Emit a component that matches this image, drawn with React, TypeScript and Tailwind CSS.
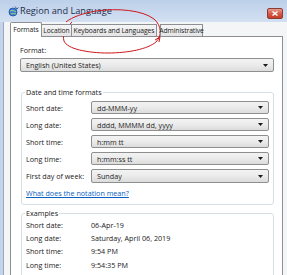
import React from "react";

const Arrow = () => (
  <svg width="5" height="3" viewBox="0 0 5 3" className="shrink-0">
    <path d="M0 0 H5 L2.5 3 Z" fill="#1a1a1a" />
  </svg>
);

const Combo = ({ text, h = "h-[13px]" }: { text: string; h?: string }) => (
  <div
    className={`flex-1 ${h} flex items-center pl-[5px] pr-[5px] border border-[#8e8f8f] rounded-[2px] bg-gradient-to-b from-[#f3f3f3] via-[#ebebeb] to-[#dcdcdc]`}
  >
    <span className="flex-1 truncate text-[#1e1e1e]">{text}</span>
    <Arrow />
  </div>
);

export default function App() {
  const rows = [
    ["Short date:", "dd-MMM-yy"],
    ["Long date:", "dddd, MMMM dd, yyyy"],
    ["Short time:", "h:mm tt"],
    ["Long time:", "h:mm:ss tt"],
    ["First day of week:", "Sunday"],
  ];
  const examples = [
    ["Short date:", "06-Apr-19"],
    ["Long date:", "Saturday, April 06, 2019"],
    ["Short time:", "9:54 PM"],
    ["Long time:", "9:54:35 PM"],
  ];
  return (
    <div className="relative w-[287px] h-[275px] overflow-hidden flex flex-col bg-[#c3d4eb] font-['Open_Sans',sans-serif] text-[7.2px] leading-[10px] text-[#222]">
      {/* title bar */}
      <div className="h-[22px] shrink-0 flex items-start bg-gradient-to-b from-[#bcd0ea] to-[#d3e0f1]">
        <svg width="11" height="11" viewBox="0 0 11 11" className="ml-[8px] mt-[6px]">
          <circle cx="5" cy="6" r="4" fill="#3b7dd8" stroke="#1f4f9a" strokeWidth="0.8" />
          <path d="M2 5 Q5 3 8 6 M3 8 Q5 7 8 8" stroke="#9fd07a" strokeWidth="1" fill="none" />
          <path d="M7 0.5 L9 3 L10.5 1.5" stroke="#2f5e9e" strokeWidth="1" fill="none" />
        </svg>
        <span className="ml-[1px] mt-[4px] text-[9.2px] leading-[14px] text-[#1d2f4a] whitespace-nowrap">Region and Language</span>
        <div className="ml-auto mr-[4px] mt-[8px] w-[16px] h-[11px] rounded-[2px] border border-[#8e3b33] bg-gradient-to-b from-[#e59a8e] via-[#d45c4c] to-[#c53c2a] flex items-center justify-center">
          <svg width="6" height="5" viewBox="0 0 6 5">
            <path d="M0.5 0.5 L5.5 4.5 M5.5 0.5 L0.5 4.5" stroke="#fff" strokeWidth="1.4" />
          </svg>
        </div>
      </div>
      {/* client */}
      <div className="flex-1 ml-[3px] border-l border-[#9aa8bb] bg-[#f4f5f7] flex flex-col pl-[6px] pr-[4px]">
        {/* tabs */}
        <div className="h-[14px] flex items-end shrink-0 relative z-10 text-[6.8px] whitespace-nowrap tracking-[-0.1px]">
          <div className="h-[15px] w-[32px] bg-white border border-b-0 border-[#8c8e94] rounded-t-[2px] flex items-center justify-center -mb-px">
            Formats
          </div>
          <div className="h-[12px] w-[30px] border border-b-0 border-l-0 border-[#8c8e94] bg-gradient-to-b from-[#f6f6f6] to-[#e4e4e4] flex items-center justify-center">
            Location
          </div>
          <div className="h-[12px] w-[85px] border border-b-0 border-l-0 border-[#8c8e94] bg-gradient-to-b from-[#f6f6f6] to-[#e4e4e4] flex items-center justify-center">
            Keyboards and Languages
          </div>
          <div className="h-[12px] w-[43px] ml-[3px] border border-b-0 border-[#8c8e94] bg-gradient-to-b from-[#f6f6f6] to-[#e4e4e4] flex items-center justify-center">
            Administrative
          </div>
        </div>
        {/* panel */}
        <div className="flex-1 bg-white border border-[#8c8e94] border-b-0 pl-[9px] pr-[8px] pt-[8px] flex flex-col">
          <div className="h-[10px]">Format:</div>
          <div className="mt-[3px] flex">
            <Combo text="English (United States)" h="h-[14px]" />
          </div>
          {/* group 1 */}
          <div className="mt-[20px] border border-[#d5dfe5] rounded-[3px] ml-[1px] pl-[4px] pr-[4px] pb-[6px] relative">
            <span className="absolute -top-[6px] left-[3px] bg-white px-[1px]">Date and time formats</span>
            <div className="pt-[8px] flex flex-col gap-[4px]">
              {rows.map(([l, v]) => (
                <div key={l} className="flex items-center">
                  <span className="w-[65px] shrink-0">{l}</span>
                  <Combo text={v} h={l === "First day of week:" ? "h-[14px]" : "h-[13px]"} />
                </div>
              ))}
            </div>
            <div className="mt-[5px] text-[#0a5fc4] underline">What does the notation mean?</div>
          </div>
          {/* group 2 */}
          <div className="mt-[8px] border border-[#d5dfe5] rounded-[3px] ml-[1px] pl-[4px] pr-[4px] pt-[4px] h-[80px] relative">
            <span className="absolute -top-[6px] left-[3px] bg-white px-[1px]">Examples</span>
            {examples.map(([l, v]) => (
              <div key={l} className="flex items-center h-[13.4px]">
                <span className="w-[65px] shrink-0">{l}</span>
                <span>{v}</span>
              </div>
            ))}
          </div>
        </div>
      </div>
      {/* red annotation */}
      <svg className="absolute left-0 top-0 pointer-events-none" width="287" height="275" viewBox="0 0 287 275">
        <path
          d="M72 22 C66 28 62 35 64 41 C67 49 88 53 108 53 C128 53 148 49 156 42 C162 36 162 26 154 19 C142 10 118 8 96 11 C84 13 72 17 66 22"
          stroke="#d0161b"
          strokeWidth="1"
          fill="none"
        />
        <path d="M155 40 L160 37 L159 42" stroke="#d0161b" strokeWidth="1" fill="none" />
      </svg>
    </div>
  );
}
